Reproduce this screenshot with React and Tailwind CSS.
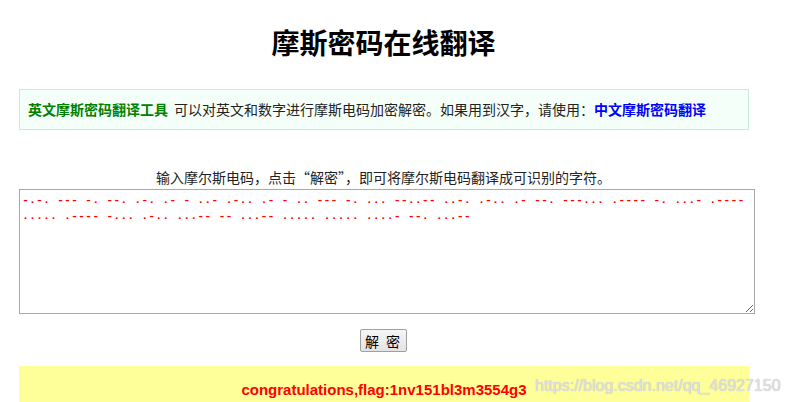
import React from "react";

const morse =
  "-.-. --- -. --. .-. .- - ..- .-.. .- - .. --- -. ... --..-- ..-. .-.. .- --. ---... .---- -. ...- .---- ..... .---- -... .-.. ...-- -- ...-- ..... ..... ....- --. ...--";

const cjk = "font-['Microsoft_YaHei','Noto_Sans_CJK_SC',sans-serif]";

export default function App() {
  return (
    <div className="relative w-[790px] h-[402px] overflow-hidden bg-white">
      <div className={`w-[767px] px-[19px] ${cjk}`}>
        {/* title */}
        <h1 className="mt-[26px] text-center text-[28px] leading-[32px] font-bold text-black">
          摩斯密码在线翻译
        </h1>

        {/* info box */}
        <div className="mt-[31px] w-[730px] h-[41px] flex items-center px-[8px] border border-[#c9ebdc] bg-[#f5fffa] text-[14px] text-[#222]">
          <span className="font-bold text-[#008000]">英文摩斯密码翻译工具</span>
          <span className="ml-[6px]">可以对英文和数字进行摩斯电码加密解密。如果用到汉字，请使用：</span>
          <a href="#" className="font-bold text-[#0000ff]">中文摩斯密码翻译</a>
        </div>

        {/* instructions */}
        <p className="mt-[37px] text-center text-[14px] leading-[20px] text-[#222]">
          输入摩尔斯电码，点击“解密”，即可将摩尔斯电码翻译成可识别的字符。
        </p>

        <textarea
          className="mt-[2px] block w-[736px] h-[125px] border border-[#a9a9a9] p-[2px] font-['Liberation_Mono',monospace] font-bold text-[11.7px] leading-[16px] text-[#ff0000] outline-none"
          defaultValue={morse}
        />

        <div className="mt-[15px] flex justify-center">
          <button className="w-[47px] h-[23px] border border-[#a0a0a0] rounded-[2px] bg-gradient-to-b from-[#f6f6f6] to-[#e3e3e3] text-[14px] leading-none text-black tracking-[2px]">
            解 密
          </button>
        </div>

        {/* result */}
        <div className="mt-[14px] w-[730px] h-[50px] bg-[#ffff99] pt-[10px] text-center">
          <span className="font-['Liberation_Sans',sans-serif] font-bold text-[15px] leading-[20px] text-[#ff0000]">
            congratulations,flag:1nv151bl3m3554g3
          </span>
        </div>
      </div>

      {/* watermark */}
      <div className="absolute left-[535px] top-[374px] font-['Liberation_Sans',sans-serif] text-[16px] text-[#e0e0e0] [text-shadow:0_0_1px_#b0b0b0]">
        https://blog.csdn.net/qq_46927150
      </div>
    </div>
  );
}
